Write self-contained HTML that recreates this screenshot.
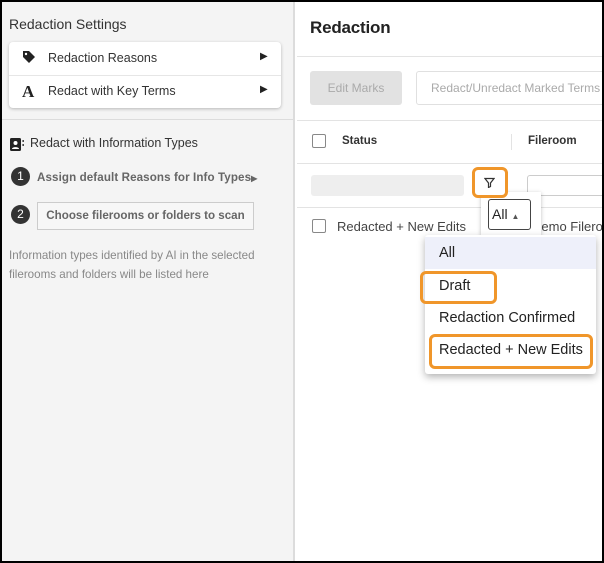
<!DOCTYPE html>
<html><head><style>
*{box-sizing:border-box;margin:0;padding:0}
body{width:604px;height:563px;position:relative;overflow:hidden;font-family:"Liberation Sans",sans-serif;background:#000}
.a{position:absolute}
.t{position:absolute;white-space:nowrap}
.or{position:absolute;border:3px solid #f0962a;border-radius:6px}
</style></head><body>
<div class="a" style="left:2px;top:2px;width:600px;height:559px;background:#fff;overflow:hidden">
<!-- left panel -->
<div class="a" style="left:0;top:0;width:293px;height:559px;background:#f4f4f4;border-right:2px solid #dcdcdc"></div>
<div class="t" style="left:7px;top:14px;font-size:14px;color:#333">Redaction Settings</div>
<div class="a" style="left:7px;top:40px;width:272px;height:66px;background:#fff;border-radius:4px;box-shadow:0 1px 3px rgba(0,0,0,.25)"></div>
<div class="a" style="left:7px;top:73px;width:272px;height:1px;background:#e6e6e6"></div>
<svg class="a" style="left:20px;top:48px" width="14" height="14" viewBox="0 0 14 14"><path d="M1 1h6l6 6-6 6-6-6z" fill="#222"/><circle cx="4" cy="4" r="1.2" fill="#fff"/></svg>
<div class="t" style="left:46px;top:49px;font-size:12.5px;color:#333">Redaction Reasons</div>
<div class="t" style="left:258px;top:49px;font-size:10px;color:#222">▶</div>
<div class="t" style="left:20px;top:80px;font-family:'Liberation Serif',serif;font-size:17px;font-weight:bold;color:#222">A</div>
<div class="t" style="left:46px;top:82px;font-size:12.5px;color:#333">Redact with Key Terms</div>
<div class="t" style="left:258px;top:82px;font-size:10px;color:#222">▶</div>
<div class="a" style="left:0;top:117px;width:293px;height:1px;background:#dcdcdc"></div>
<svg class="a" style="left:8px;top:136px" width="14" height="13" viewBox="0 0 14 13"><rect x="0" y="0" width="11" height="13" rx="1.5" fill="#222"/><circle cx="5.5" cy="5" r="2" fill="#fff"/><path d="M2 11c0-2.5 7-2.5 7 0z" fill="#fff"/><rect x="12.5" y="2" width="1.3" height="2" fill="#222"/><rect x="12.5" y="6" width="1.3" height="2" fill="#222"/></svg>
<div class="t" style="left:28px;top:134px;font-size:12.5px;color:#333">Redact with Information Types</div>
<div class="a" style="left:9px;top:165px;width:19px;height:19px;border-radius:50%;background:#333;color:#fff;font-size:12px;text-align:center;line-height:19px">1</div>
<div class="t" style="left:35px;top:169px;font-size:11.6px;color:#666;font-weight:bold;letter-spacing:.1px">Assign default Reasons for Info Types<span style="font-size:8px">▶</span></div>
<div class="a" style="left:9px;top:203px;width:19px;height:19px;border-radius:50%;background:#333;color:#fff;font-size:12px;text-align:center;line-height:19px">2</div>
<div class="a" style="left:35px;top:200px;width:217px;height:28px;border:1px solid #ccc;background:#f7f7f7;font-size:11.6px;color:#666;font-weight:bold;text-align:center;line-height:26px">Choose filerooms or folders to scan</div>
<div class="t" style="left:7px;top:244px;font-size:11.6px;color:#888;line-height:19px">Information types identified by AI in the selected<br>filerooms and folders will be listed here</div>
<!-- right -->
<div class="t" style="left:308px;top:16px;font-size:17px;color:#222;font-weight:bold;letter-spacing:-.2px">Redaction</div>
<div class="a" style="left:295px;top:54px;width:305px;height:1px;background:#e3e3e3"></div>
<div class="a" style="left:308px;top:69px;width:92px;height:34px;background:#e2e2e2;border-radius:3px;font-size:12px;color:#aaa;text-align:center;line-height:34px">Edit Marks</div>
<div class="a" style="left:414px;top:69px;width:200px;height:34px;border:1px solid #e0e0e0;border-radius:3px;font-size:12px;color:#aaa;line-height:32px;padding-left:14px;white-space:nowrap">Redact/Unredact Marked Terms</div>
<div class="a" style="left:295px;top:118px;width:305px;height:1px;background:#e3e3e3"></div>
<div class="a" style="left:310px;top:132px;width:14px;height:14px;border:1.5px solid #888;border-radius:2px"></div>
<div class="t" style="left:340px;top:133px;font-size:11.5px;font-weight:bold;color:#333">Status</div>
<div class="a" style="left:509px;top:132px;width:1px;height:16px;background:#e3e3e3"></div>
<div class="t" style="left:526px;top:133px;font-size:11.5px;font-weight:bold;color:#333">Fileroom</div>
<div class="a" style="left:295px;top:161px;width:305px;height:1px;background:#e3e3e3"></div>
<div class="a" style="left:309px;top:173px;width:153px;height:21px;background:#eee;border-radius:3px"></div>
<div class="a" style="left:525px;top:173px;width:90px;height:21px;border:1px solid #ccc;border-radius:3px"></div>
<div class="a" style="left:295px;top:205px;width:305px;height:1px;background:#e3e3e3"></div>
<div class="a" style="left:310px;top:217px;width:14px;height:14px;border:1.5px solid #888;border-radius:2px"></div>
<div class="t" style="left:335px;top:217px;font-size:13px;color:#444">Redacted + New Edits</div>
<div class="t" style="left:530px;top:217px;font-size:13px;color:#444">Demo Fileroom</div>
<!-- small popup -->
<div class="a" style="left:479px;top:190px;width:60px;height:44px;background:#fff;box-shadow:0 1px 4px rgba(0,0,0,.25)"></div>
<div class="a" style="left:486px;top:197px;width:43px;height:31px;border:1.5px solid #444;border-radius:3px;background:#fff;font-size:14px;color:#222;line-height:28px;padding-left:3px">All <span style="font-size:8px;color:#555">▲</span></div>
<!-- filter btn -->
<div class="a" style="left:473px;top:168px;width:30px;height:25px;background:#fff"></div>
<div class="or" style="left:470px;top:165px;width:36px;height:31px"></div>
<svg class="a" style="left:482px;top:175px" width="11" height="11" viewBox="0 0 11 11"><path d="M1 1.5h9L6.5 6v3.5l-2 1V6z" fill="none" stroke="#333" stroke-width="1.2"/></svg>
<!-- dropdown -->
<div class="a" style="left:423px;top:233px;width:171px;height:139px;background:#fff;border-radius:3px;box-shadow:0 3px 8px rgba(0,0,0,.3)"></div>
<div class="a" style="left:423px;top:235px;width:171px;height:32px;background:#eef0fa"></div>
<div class="t" style="left:437px;top:243px;font-size:14.5px;color:#222">All</div>
<div class="t" style="left:437px;top:276px;font-size:14.5px;color:#222">Draft</div>
<div class="t" style="left:437px;top:308px;font-size:14.5px;color:#222">Redaction Confirmed</div>
<div class="t" style="left:437px;top:340px;font-size:14.5px;color:#222">Redacted + New Edits</div>
<div class="or" style="left:418px;top:269px;width:77px;height:33px"></div>
<div class="or" style="left:427px;top:332px;width:164px;height:35px"></div>
</div>
</body></html>
